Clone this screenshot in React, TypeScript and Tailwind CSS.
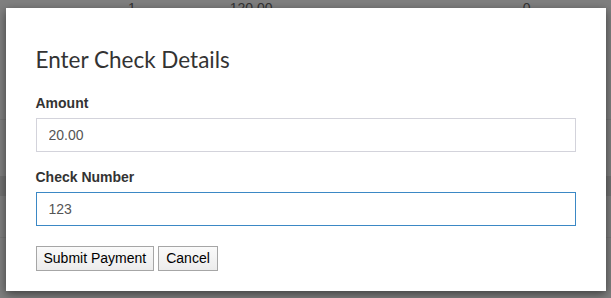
export default function App() {
  return (
    <div className="relative h-[298px] w-[611px] overflow-hidden bg-[#7f7f7f] font-['Liberation_Sans',Arial,sans-serif]">
      {/* page behind the overlay */}
      <div className="flex flex-col text-[14px] text-[#333]">
        <div className="flex h-[8px] items-start pt-[1px] leading-[14px]">
          <span className="ml-[128px]">1</span>
          <span className="ml-[94px]">120.00</span>
          <span className="ml-[250px]">0</span>
        </div>
        <div className="h-[112px] border-b border-[#767676]" />
        <div className="h-[56px]" />
        <div className="h-[20px] bg-[#727272]" />
        <div className="h-[42px] border-b border-[#777]" />
        <div className="flex h-[60px] items-end leading-[14px]">
          <span className="ml-[484px] translate-y-[8px] tracking-[6px]">....</span>
        </div>
      </div>

      <div className="absolute left-[5.5px] top-[8px] w-[600px] bg-white px-[30px] pb-[20px] pt-[39px] shadow-[0_3px_9px_rgba(0,0,0,0.5)]">
        <h4 className="font-['Lato','Open_Sans',sans-serif] text-[22.5px] leading-[26px] text-[#333]">
          Enter Check Details
        </h4>
        <div className="mt-[20px]">
          <label className="mb-[5px] block text-[14px] font-bold leading-[20px] text-[#333]">Amount</label>
          <input
            readOnly
            value="20.00"
            className="block h-[34px] w-full border border-[#d3d3db] px-[12px] text-[14px] text-[#555] outline-none"
          />
        </div>
        <div className="mt-[15px]">
          <label className="mb-[5px] block text-[14px] font-bold leading-[20px] text-[#333]">Check Number</label>
          <input
            readOnly
            value="123"
            className="block h-[34px] w-full border border-[#3b88c5] px-[12px] text-[14px] text-[#555] outline-none"
          />
        </div>
        <div className="mt-[20px] flex gap-[4px]">
          <button className="h-[25px] border border-[#a6a6a6] bg-gradient-to-b from-[#fafafa] to-[#ececec] px-[7px] text-[14px] leading-[23px] text-black">
            Submit Payment
          </button>
          <button className="h-[25px] border border-[#a6a6a6] bg-gradient-to-b from-[#fafafa] to-[#ececec] px-[7px] text-[14px] leading-[23px] text-black">
            Cancel
          </button>
        </div>
      </div>
    </div>
  );
}
